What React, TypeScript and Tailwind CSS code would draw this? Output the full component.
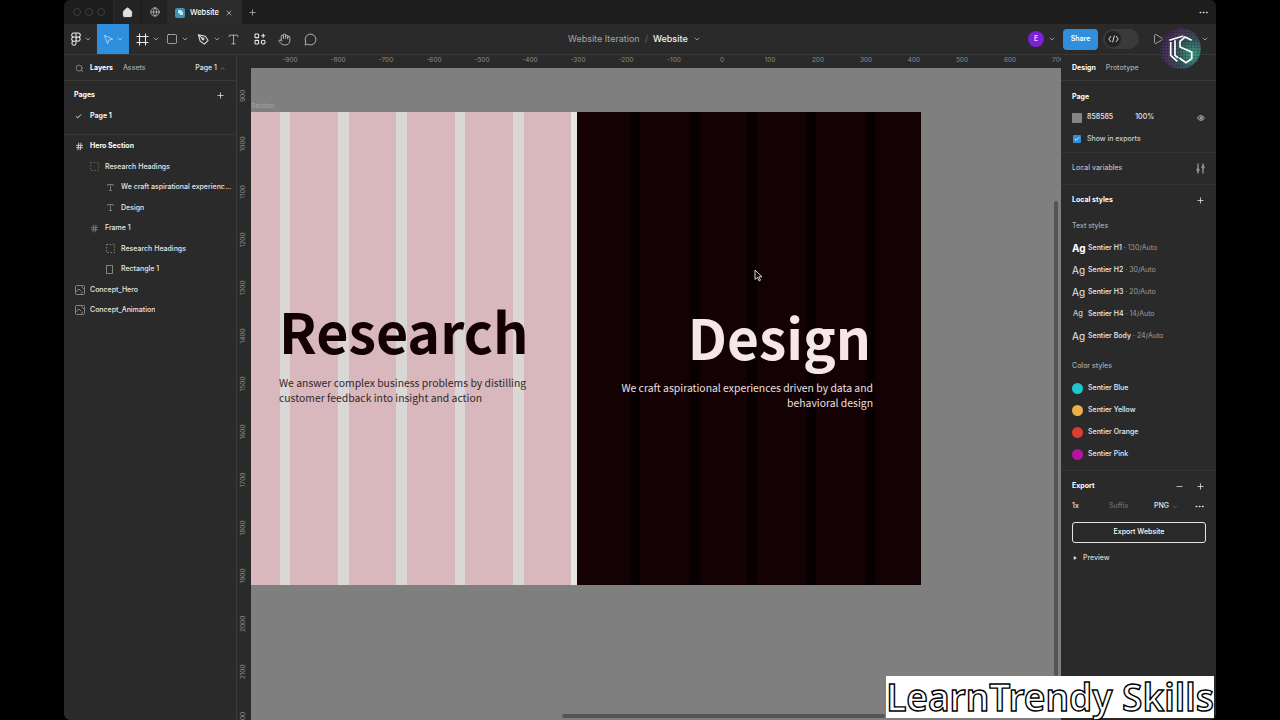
import React from "react";
import { House, Globe, X, Plus, ChevronDown, Hash, Square, Type, Hand, MessageCircle, Search, Check, Eye, Ellipsis, Minus, Play } from "lucide-react";

const Chev = ({ c = "text-[#d0d0d0]" }: { c?: string }) => <ChevronDown size={8} strokeWidth={2} className={c} />;

const FigmaLogo = () => (
  <svg width="10" height="14" viewBox="0 0 10 15" fill="none" stroke="#e8e8e8" strokeWidth="1.1">
    <path d="M5 1H2.6a2.2 2.2 0 0 0 0 4.4H5zM5 1h2.4a2.2 2.2 0 0 1 0 4.4H5zM5 5.4H2.6a2.2 2.2 0 0 0 0 4.4H5zM5 9.8H2.6A2.2 2.2 0 1 0 5 12zM9.4 7.6a2.2 2.2 0 1 1-4.4 0 2.2 2.2 0 0 1 4.4 0z" />
  </svg>
);

const Cursor = ({ color = "#8fd0ff" }: { color?: string }) => (
  <svg width="11" height="11" viewBox="0 0 12 12" fill="none" stroke={color} strokeWidth="1.1"><path d="M1.5 1.5 10.5 5.5 6.5 6.8 5 10.5z" strokeLinejoin="round" /></svg>
);

const PenIcon = () => (
  <svg width="13" height="13" viewBox="0 0 14 14" fill="none" stroke="#e8e8e8" strokeWidth="1.1"><path d="M1.5 2 9 3.5 12 8 8 12 3.5 9z" strokeLinejoin="round" /><circle cx="6.5" cy="6.5" r="1" /><path d="M2 2.5 6 6" /></svg>
);

const CompIcon = () => (
  <svg width="12" height="12" viewBox="0 0 12 12" fill="none" stroke="#e8e8e8" strokeWidth="1.1"><rect x="1" y="1" width="3.6" height="3.6" rx=".7" /><rect x="1" y="7.4" width="3.6" height="3.6" rx=".7" /><circle cx="9.2" cy="9.2" r="1.9" /><path d="M9.2 .8v4M7.2 2.8h4" /></svg>
);

const FrameIcon = () => (
  <svg width="13" height="13" viewBox="0 0 13 13" fill="none" stroke="#e8e8e8" strokeWidth="1.1"><path d="M3.5.5v12M9.5.5v12M.5 3.5h12M.5 9.5h12" /></svg>
);

const CodeToggle = () => (
  <div className="w-[36px] h-[20px] rounded-full bg-[#3a3a3a] flex items-center p-[2px]">
    <div className="w-[16px] h-[16px] rounded-full bg-[#242424] flex items-center justify-center">
      <svg width="11" height="8" viewBox="0 0 11 8" fill="none" stroke="#eee" strokeWidth=".9"><path d="M3 1 .8 4 3 7M8 1l2.2 3L8 7M6.4.6 4.6 7.4" /></svg>
    </div>
  </div>
);

const SliderIcon = () => (
  <svg width="9" height="11" viewBox="0 0 9 11" fill="none" stroke="#ddd" strokeWidth=".8"><path d="M2 .5v5M2 8v2.5M7 .5V3M7 5.5v5" /><circle cx="2" cy="6.8" r="1.1" /><circle cx="7" cy="4.2" r="1.1" /></svg>
);

const DashedBox = ({ c = "#7d7d7d" }: { c?: string }) => (
  <svg width="9" height="9" viewBox="0 0 9 9" fill="none" stroke={c} strokeWidth="1" strokeDasharray="1.6 1.5"><rect x=".5" y=".5" width="8" height="8" /></svg>
);

const CompSquare = () => (
  <svg width="10" height="10" viewBox="0 0 10 10" fill="none" stroke="#9a9a9a" strokeWidth=".8"><rect x=".5" y=".5" width="9" height="9" rx="1.2" /><path d="M.5 7 4 4l2 2M6.5 1.5 9 4M6 8.5 8 6.8" /></svg>
);

const LayerRow = ({ depth, icon, label, bold }: { depth: string; icon: React.ReactNode; label: string; bold?: boolean }) => (
  <div className={`h-[20.5px] flex items-center ${depth}`}>
    <span className="w-[15px] flex justify-start shrink-0">{icon}</span>
    <span className={`text-[7px] truncate ${bold ? "font-bold text-white" : "font-medium text-[#e6e6e6]"}`}>{label}</span>
  </div>
);

const LeftPanel = () => (
  <aside className="w-[173px] shrink-0 bg-[#2a2a2a] border-r border-[#3a3a3a] flex flex-col">
    <div className="h-[26px] flex items-center pt-[1px] pl-[11px] pr-[10px] border-b border-[#383838]">
      <Search size={9} className="text-[#9a9a9a]" />
      <span className="ml-[6px] text-[7px] font-bold text-white">Layers</span>
      <span className="ml-[10px] text-[7px] font-medium text-[#a8a8a8]">Assets</span>
      <span className="ml-auto text-[7px] font-medium text-[#e6e6e6]">Page 1</span>
      <ChevronDown size={7} className="ml-[2px] rotate-180 text-[#999]" />
    </div>
    <div className="h-[54px] border-b border-[#383838] flex flex-col">
      <div className="h-[28px] flex items-center justify-between pl-[10px] pr-[11px]">
        <span className="text-[7px] font-bold text-white">Pages</span>
        <Plus size={9} className="text-[#eee]" />
      </div>
      <div className="h-[14px] flex items-center pl-[11px]">
        <Check size={7} strokeWidth={3} className="text-white" />
        <span className="ml-[8px] text-[7px] font-bold text-[#efefef]">Page 1</span>
      </div>
    </div>
    <div className="pt-[1px]">
      <LayerRow depth="pl-[11px]" bold icon={<Hash size={9} strokeWidth={2.2} className="text-[#e8e8e8]" />} label="Hero Section" />
      <LayerRow depth="pl-[26px]" icon={<DashedBox c="#5f5f5f" />} label="Research Headings" />
      <LayerRow depth="pl-[42px]" icon={<Type size={9} className="text-[#8c8c8c]" />} label="We craft aspirational experienc..." />
      <LayerRow depth="pl-[42px]" icon={<Type size={9} className="text-[#8c8c8c]" />} label="Design" />
      <LayerRow depth="pl-[26px]" icon={<Hash size={9} className="text-[#8c8c8c]" />} label="Frame 1" />
      <LayerRow depth="pl-[42px]" icon={<DashedBox />} label="Research Headings" />
      <LayerRow depth="pl-[42px]" icon={<svg width="7" height="9" viewBox="0 0 7 9" fill="none" stroke="#8c8c8c" strokeWidth=".9"><rect x=".5" y=".5" width="6" height="8" /></svg>} label="Rectangle 1" />
      <LayerRow depth="pl-[11px]" icon={<CompSquare />} label="Concept_Hero" />
      <LayerRow depth="pl-[11px]" icon={<CompSquare />} label="Concept_Animation" />
    </div>
  </aside>
);

const TextStyle = ({ big, name, meta, small }: { big?: boolean; name: string; meta: string; small?: boolean }) => (
  <div className="h-[22px] flex items-center">
    <span className={`w-[16px] text-[#e8e8e8] ${small ? "text-[7.5px] font-normal pl-[1px]" : "text-[10px]"} ${big ? "font-bold text-white" : ""}`}>Ag</span>
    <span className="text-[7px] font-medium text-[#ececec]">{name}</span>
    <span className="text-[7px] text-[#9e9e9e]">&nbsp;· {meta}</span>
  </div>
);

const ColorStyle = ({ color, name }: { color: string; name: string }) => (
  <div className="h-[22px] flex items-center">
    <span className={`w-[11px] h-[11px] rounded-full ${color}`} />
    <span className="ml-[5px] text-[7px] font-medium text-[#ececec]">{name}</span>
  </div>
);

const RightPanel = () => (
  <aside className="w-[155px] shrink-0 bg-[#2a2a2a] flex flex-col">
    <div className="h-[26px] flex items-center pt-[1px] pl-[11px] border-b border-[#383838]">
      <span className="text-[7px] font-bold text-white">Design</span>
      <span className="ml-[10px] text-[7px] font-medium text-[#a8a8a8]">Prototype</span>
    </div>
    <div className="h-[72px] pl-[11px] pr-[11px] border-b border-[#333333]">
      <div className="h-[31px] pt-[1px] flex items-center text-[7px] font-bold text-white">Page</div>
      <div className="h-[11px] flex items-center">
        <span className="w-[10px] h-[10px] bg-[#858585] rounded-[1px]" />
        <span className="ml-[5px] text-[7px] font-medium text-[#e8e8e8]">858585</span>
        <span className="ml-[22px] text-[7px] font-medium text-[#e8e8e8]">100%</span>
        <Eye size={8} className="ml-auto text-[#eee]" />
      </div>
      <div className="mt-[10px] h-[12px] flex items-center">
        <span className="w-[8px] h-[8px] bg-[#2f8fd6] rounded-[1px] flex items-center justify-center ml-[1px]"><Check size={6} strokeWidth={3.5} className="text-white" /></span>
        <span className="ml-[6px] text-[7px] font-medium text-[#cfcfcf]">Show in exports</span>
      </div>
    </div>
    <div className="h-[32px] flex items-center justify-between pl-[11px] pr-[11px] border-b border-[#333333]">
      <span className="text-[7px] font-medium text-[#bdbdbd]">Local variables</span>
      <SliderIcon />
    </div>
    <div className="px-[11px]">
      <div className="h-[31px] flex items-center justify-between">
        <span className="text-[7px] font-bold text-white">Local styles</span>
        <Plus size={9} className="text-[#eee]" />
      </div>
      <div className="h-[21px] flex items-center text-[7px] font-medium text-[#a8a8a8]">Text styles</div>
      <div>
        <TextStyle big name="Sentier H1" meta="130/Auto" />
        <TextStyle name="Sentier H2" meta="30/Auto" />
        <TextStyle name="Sentier H3" meta="20/Auto" />
        <TextStyle small name="Sentier H4" meta="14/Auto" />
        <TextStyle name="Sentier Body" meta="24/Auto" />
      </div>
      <div className="mt-[9px] h-[21px] flex items-center text-[7px] font-medium text-[#a8a8a8]">Color styles</div>
      <ColorStyle color="bg-[#1fc4cc]" name="Sentier Blue" />
      <ColorStyle color="bg-[#e9b04c]" name="Sentier Yellow" />
      <ColorStyle color="bg-[#da3d33]" name="Sentier Orange" />
      <ColorStyle color="bg-[#b4149e]" name="Sentier Pink" />
    </div>
    <div className="mt-[5px] border-t border-[#333333] px-[11px]">
      <div className="h-[30px] flex items-center">
        <span className="text-[7px] font-bold text-white">Export</span>
        <Minus size={9} className="ml-auto text-[#ddd]" />
        <Plus size={9} className="ml-[12px] text-[#eee]" />
      </div>
      <div className="h-[11px] flex items-center text-[7px] font-medium text-[#e8e8e8]">
        <span className="w-[37px]">1x</span>
        <span className="w-[45px] text-[#6f6f6f]">Suffix</span>
        <span>PNG</span>
        <ChevronDown size={6} className="ml-[3px] text-[#888]" />
        <Ellipsis size={11} className="ml-auto text-[#eee]" />
      </div>
      <div className="mt-[10px] h-[21px] w-[134px] rounded-[3px] border border-[#e4e4e4] flex items-center justify-center text-[7px] font-medium text-white">Export Website</div>
      <div className="mt-[5px] h-[20px] flex items-center">
        <Play size={4} fill="#ddd" className="text-[#ddd] ml-[1px]" />
        <span className="ml-[6px] text-[7px] font-medium text-[#d8d8d8]">Preview</span>
      </div>
    </div>
  </aside>
);

const topMarks = [-900, -800, -700, -600, -500, -400, -300, -200, -100, 0, 100, 200, 300, 400, 500, 600, 700];
const sideMarks = [900, 1000, 1100, 1200, 1300, 1400, 1500, 1600, 1700, 1800, 1900, 2000, 2100, 2200];

const Canvas = () => (
  <main className="relative flex-1 bg-[#7f7f7f] overflow-hidden">
    <span className="absolute left-0 top-[34px] text-[6.5px] text-[#a9a9a9]">Section</span>
    <div className="absolute left-0 top-[44px] h-[473px] w-[670px] flex">
      <div className="relative w-[326px] bg-[#d8b8bc] overflow-hidden [font-family:'Noto_Sans_CJK_SC',sans-serif]">
        <div className="absolute inset-0 flex">
          <div className="w-[29px]" />
          <div className="w-[10px] bg-[#dad8d6]" />
          <div className="w-[48px]" />
          <div className="w-[11px] bg-[#dad8d6]" />
          <div className="w-[47px]" />
          <div className="w-[11px] bg-[#dad8d6]" />
          <div className="w-[48px]" />
          <div className="w-[10px] bg-[#dad8d6]" />
          <div className="w-[48px]" />
          <div className="w-[11px] bg-[#dad8d6]" />
          <div className="w-[47px]" />
          <div className="w-[6px] bg-[#e6e4e3]" />
        </div>
        <div className="absolute left-[28px] top-[183px] text-[55.5px] leading-[70px] font-bold text-[#120003]">Research</div>
        <p className="absolute left-[28px] top-[264px] w-[262px] text-[10.4px] leading-[14.5px] text-[#33262a]">We answer complex business problems by distilling customer feedback into insight and action</p>
      </div>
      <div className="relative w-[344px] bg-[#130103] overflow-hidden [font-family:'Noto_Sans_CJK_SC',sans-serif]">
        <div className="absolute inset-0 flex">
          <div className="w-[53px]" />
          <div className="w-[10px] bg-[#080000]" />
          <div className="w-[50px]" />
          <div className="w-[10px] bg-[#080000]" />
          <div className="w-[47px]" />
          <div className="w-[10px] bg-[#080000]" />
          <div className="w-[49px]" />
          <div className="w-[10px] bg-[#080000]" />
          <div className="w-[49px]" />
          <div className="w-[10px] bg-[#080000]" />
        </div>
        <div className="absolute right-[50px] top-[189px] text-[55px] leading-[70px] font-bold text-[#f5e6e8]">Design</div>
        <p className="absolute right-[48px] top-[269px] w-[262px] text-right text-[10.4px] leading-[14.5px] text-[#ece0e2]">We craft aspirational experiences driven by data and behavioral design</p>
      </div>
    </div>
    <svg className="absolute left-[503px] top-[201px]" width="9" height="13" viewBox="0 0 9 13"><path d="M1 1v9.5l2.4-2.2 1.7 3.6 1.4-.7-1.7-3.4H8z" fill="#111" stroke="#fff" strokeWidth=".8" /></svg>
    <div className="absolute right-[3px] top-[133px] h-[475px] w-[4px] rounded bg-[#555]" />
    <div className="absolute left-[311px] bottom-[2px] h-[4px] w-[323px] rounded bg-[#555]" />
  </main>
);

const TsLogo = () => (
  <svg className="absolute left-[1160px] top-[28px]" width="41" height="41" viewBox="0 0 41 41" fill="none">
    <defs>
      <radialGradient id="tsg" cx="0.8" cy="0.65" r="0.85">
        <stop offset="0" stopColor="#3f9c80" />
        <stop offset="0.45" stopColor="#34535a" />
        <stop offset="0.8" stopColor="#4a2f55" />
        <stop offset="1" stopColor="#2a2c40" />
      </radialGradient>
      <pattern id="tsd" width="3" height="3" patternUnits="userSpaceOnUse">
        <circle cx="1.5" cy="1.5" r="0.8" fill="#000" fillOpacity="0.35" />
      </pattern>
    </defs>
    <circle cx="20.5" cy="20.5" r="20.5" fill="url(#tsg)" />
    <circle cx="20.5" cy="20.5" r="20.5" fill="url(#tsd)" />
    <g stroke="#fff" strokeWidth="1.7" strokeLinejoin="miter">
      <path d="M9.3 12.3 23.3 8" />
      <path d="M10.7 14v13.3l6.6 6" />
      <path d="M15 12.3v15l3.3 2.7" />
      <path d="M31.7 12.3 25 9l-5 4.3V19l11.7 5v6.7l-5.7 4-6.7-4.7" />
    </g>
  </svg>
);

export default function App() {
  return (
    <div className="relative w-[1280px] h-[720px] bg-black overflow-hidden [font-family:Inter,sans-serif]">
      <div className="ml-[64px] w-[1152px] h-full flex flex-col rounded-[6px] overflow-hidden">
        <header className="h-[24px] shrink-0 bg-[#1d1d1d] flex items-stretch">
          <div className="w-[50px] flex items-center justify-center gap-[4px] border-r border-[#272727]">
            {[0, 1, 2].map((k) => <span key={k} className="w-[8px] h-[8px] rounded-full border border-[#3e3e3e]" />)}
          </div>
          <div className="w-[27px] flex items-center justify-center bg-[#232323]"><House size={11} fill="#e0e0e0" className="text-[#e0e0e0]" /></div>
          <div className="w-[26px] flex items-center justify-center border-l border-[#1a1a1a] bg-[#232323]"><Globe size={10} className="text-[#bbb]" /></div>
          <div className="w-[75px] bg-[#2b2b2b] flex items-center pl-[8px] pt-[1px]">
            <span className="w-[10px] h-[10px] rounded-[2px] bg-[#3f93b8] flex items-center justify-center">
              <svg width="7" height="7" viewBox="0 0 7 7"><path d="M1 1h3l2 2.5V6H3.5L1 3.5z" fill="#bfe6f5" /></svg>
            </span>
            <span className="ml-[5px] text-[7.5px] font-medium text-white">Website</span>
            <X size={8} className="ml-[6px] text-[#ddd]" />
          </div>
          <div className="ml-[6px] flex items-center"><Plus size={9} className="text-[#bdbdbd]" /></div>
          <div className="ml-auto flex items-center pr-[7px]"><Ellipsis size={11} className="text-[#e8e8e8]" /></div>
        </header>

        <div className="h-[31px] shrink-0 bg-[#2a2a2a] border-b border-[#383838] flex items-center">
          <div className="w-[33px] flex items-center justify-center gap-[3px] pl-[1px]"><FigmaLogo /><Chev /></div>
          <div className="w-[32px] h-full bg-[#2f8fdc] flex items-center justify-center gap-[2px]"><Cursor /><Chev c="text-[#bfe2ff]" /></div>
          <div className="ml-[7px] flex items-center gap-[3px]"><FrameIcon /><Chev /></div>
          <div className="ml-[6px] flex items-center gap-[3px]"><Square size={12} strokeWidth={1.2} className="text-[#e8e8e8]" /><Chev /></div>
          <div className="ml-[8px] flex items-center gap-[3px]"><PenIcon /><Chev /></div>
          <Type size={13} strokeWidth={1.2} className="ml-[6px] text-[#e8e8e8]" />
          <span className="ml-[14px]"><CompIcon /></span>
          <Hand size={13} strokeWidth={1.3} className="ml-[12px] text-[#e8e8e8]" />
          <MessageCircle size={13} strokeWidth={1.3} className="ml-[13px] text-[#e8e8e8]" />
          <div className="ml-[251px] flex items-center text-[9px]">
            <span className="text-[#a6a6a6]">Website Iteration</span>
            <span className="mx-[5px] text-[#666]">/</span>
            <span className="font-medium text-[#f2f2f2]">Website</span>
            <ChevronDown size={8} className="ml-[5px] text-[#ccc]" />
          </div>
          <div className="ml-auto flex items-center pr-[7px]">
            <span className="w-[16px] h-[16px] rounded-full bg-[#7c1fd6] flex items-center justify-center text-[7px] font-semibold text-[#e9d7ff]">E</span>
            <ChevronDown size={8} className="ml-[4px] text-[#ccc]" />
            <span className="ml-[7px] w-[35px] h-[21px] rounded-[4px] bg-[#2f8fdc] flex items-center justify-center text-[7px] font-semibold text-white">Share</span>
            <span className="ml-[5px]"><CodeToggle /></span>
            <Play size={12} strokeWidth={1.2} className="ml-[13px] text-[#eee]" />
            <ChevronDown size={8} className="ml-[37px] text-[#ccc]" />
          </div>
        </div>

        <div className="flex-1 flex min-h-0">
          <LeftPanel />
          <div className="flex-1 flex flex-col min-w-0">
            <div className="flex">
              <div className="w-[14px] h-[13px] shrink-0 bg-[#2a2a2a]" />
              <div className="relative flex-1 min-w-0 h-[13px] bg-[#2a2a2a] overflow-hidden">
                {topMarks.map((m, i) => (
                  <span key={m} style={{ left: 24 + i * 48 }} className="absolute top-[1px] w-[30px] text-center text-[6.5px] text-[#8a8a8a]">{m}</span>
                ))}
              </div>
            </div>
            <div className="flex-1 flex min-h-0">
              <div className="relative w-[14px] shrink-0 bg-[#2a2a2a] overflow-hidden">
                {sideMarks.map((m, i) => (
                  <span key={m} style={{ top: 23 + i * 48 }} className="absolute -left-[8px] w-[30px] -rotate-90 text-center text-[6.5px] text-[#8a8a8a]">{m}</span>
                ))}
              </div>
              <Canvas />
            </div>
          </div>
          <RightPanel />
        </div>
      </div>

      <TsLogo />

      <div className="absolute left-[886px] top-[676px] w-[328px] h-[42px] bg-white flex items-center justify-center">
        <span className="text-[37px] leading-[42px] font-semibold whitespace-nowrap text-white [-webkit-text-stroke:1.4px_#000] [font-family:'Noto_Sans',sans-serif]">LearnTrendy Skills</span>
      </div>
    </div>
  );
}
